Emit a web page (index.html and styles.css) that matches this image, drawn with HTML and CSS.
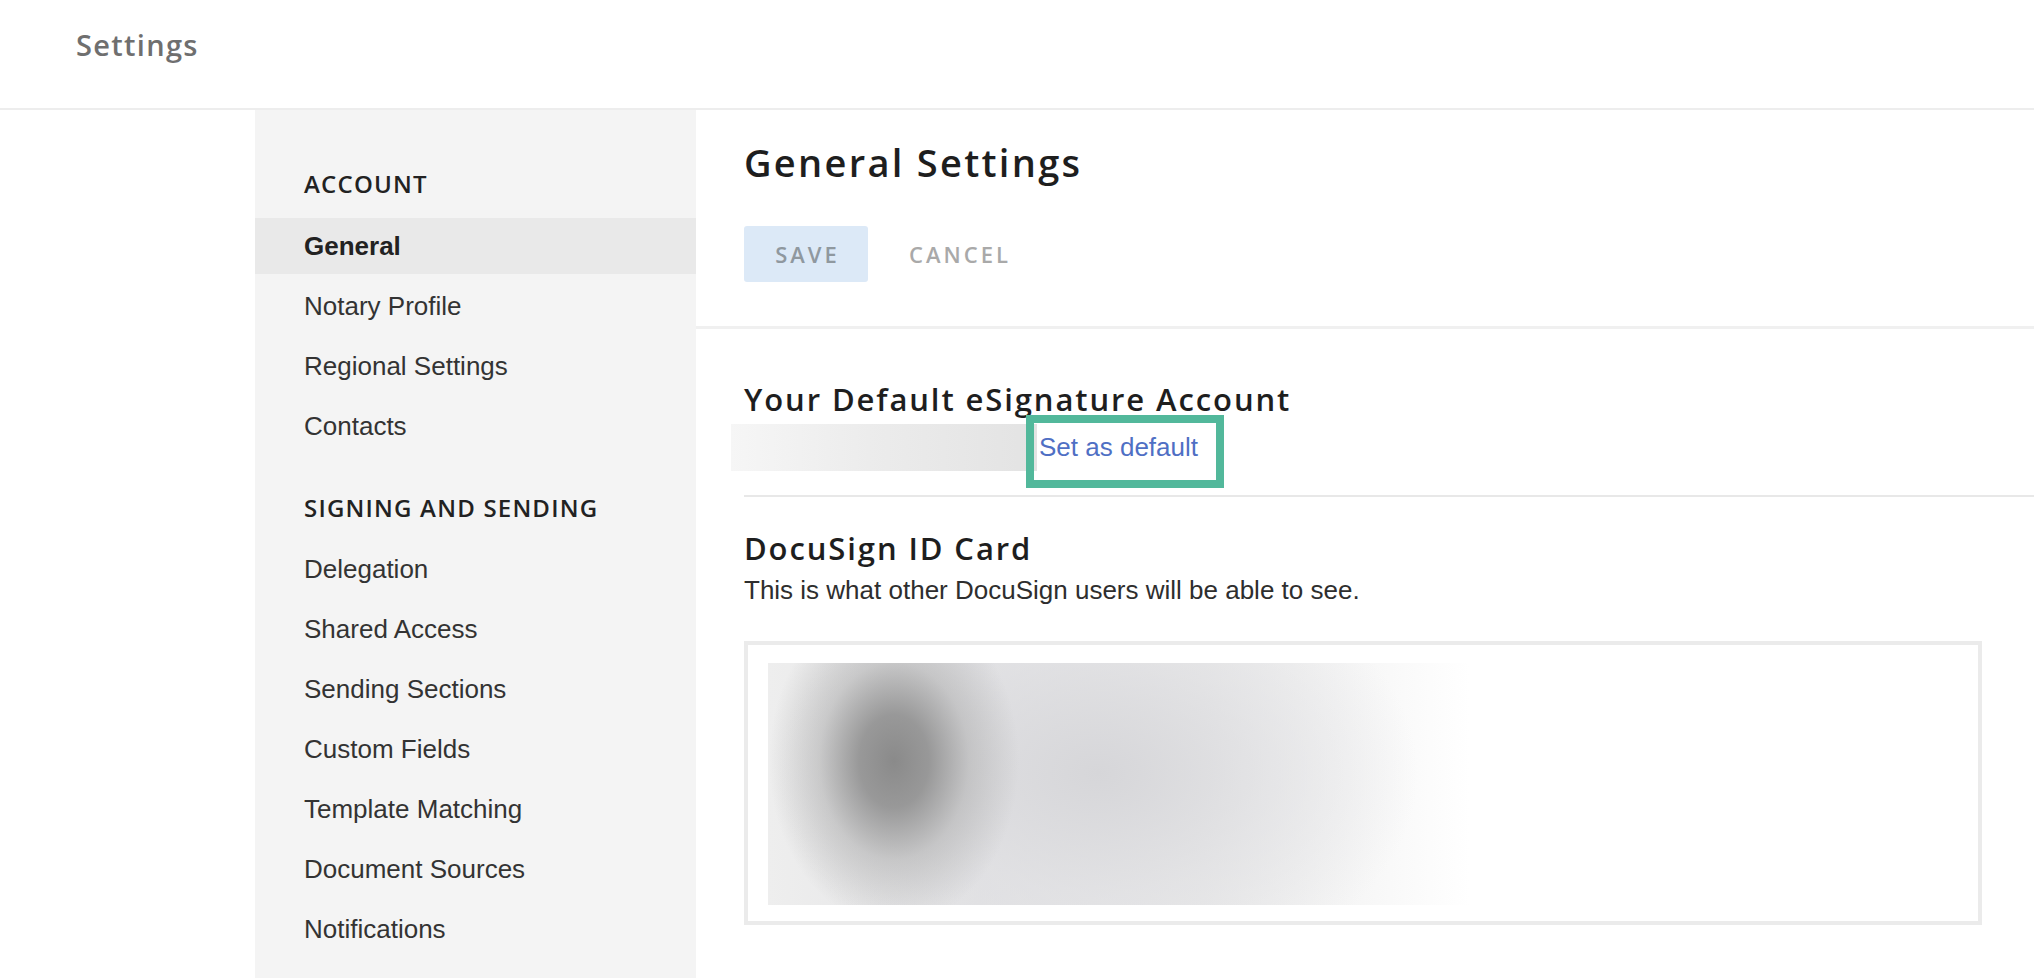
FILE: index.html
```html
<!DOCTYPE html>
<html lang="en">
<head>
<meta charset="utf-8">
<title>Settings</title>
<link rel="stylesheet" href="styles.css">
</head>
<body>
<header class="topbar">
  <div class="topbar-title">Settings</div>
</header>
<div class="layout">
  <div class="gutter"></div>
  <nav class="sidebar">
    <div class="nav-section nav-section-first">ACCOUNT</div>
    <a class="nav-item active">General</a>
    <a class="nav-item">Notary Profile</a>
    <a class="nav-item">Regional Settings</a>
    <a class="nav-item">Contacts</a>
    <div class="nav-section">SIGNING AND SENDING</div>
    <a class="nav-item">Delegation</a>
    <a class="nav-item">Shared Access</a>
    <a class="nav-item">Sending Sections</a>
    <a class="nav-item">Custom Fields</a>
    <a class="nav-item">Template Matching</a>
    <a class="nav-item">Document Sources</a>
    <a class="nav-item">Notifications</a>
  </nav>
  <main class="main">
    <section class="page-head">
      <h1 class="page-title">General Settings</h1>
      <div class="actions">
        <button class="btn btn-save">SAVE</button>
        <button class="btn btn-cancel">CANCEL</button>
      </div>
    </section>
    <section class="content">
      <h2 class="section-title section-title-first">Your Default eSignature Account</h2>
      <div class="account-row">
        <div class="blur-bar"></div>
        <div class="link-wrap">
          <a class="link">Set as default</a>
          <span class="highlight"></span>
        </div>
      </div>
      <div class="divider"></div>
      <h2 class="section-title">DocuSign ID Card</h2>
      <p class="section-sub">This is what other DocuSign users will be able to see.</p>
      <div class="id-card">
        <div class="id-blur"></div>
      </div>
    </section>
  </main>
</div>
</body>
</html>
```
FILE: styles.css
```css
* { box-sizing: border-box; }
html, body { margin: 0; padding: 0; background: #ffffff; }
body {
  font-family: "Liberation Sans", Arial, sans-serif;
  color: #333333;
  width: 2034px;
  height: 978px;
  overflow: hidden;
}

.topbar {
  height: 110px;
  border-bottom: 2px solid #ededed;
  padding: 27px 0 0 76px;
}
.topbar-title {
  font-family: "Open Sans", "Noto Sans", sans-serif;
  font-weight: 600;
  font-size: 29px;
  line-height: 36px;
  letter-spacing: 1.3px;
  color: #6f6f6f;
}

.layout {
  display: flex;
  height: 868px;
}
.gutter { width: 255px; flex: none; }

.sidebar {
  width: 441px;
  flex: none;
  background: #f4f4f4;
  padding-top: 59px;
  display: flex;
  flex-direction: column;
}
.nav-section {
  font-family: "Open Sans", "Noto Sans", sans-serif;
  font-weight: 600;
  font-size: 24px;
  line-height: 30px;
  letter-spacing: 1.2px;
  color: #222222;
  padding-left: 49px;
  margin: 35px 0 18px;
}
.nav-section-first { margin-top: 0; margin-bottom: 19px; }
.nav-item {
  display: block;
  height: 56px;
  line-height: 56px;
  margin-bottom: 4px;
  padding-left: 49px;
  font-size: 26px;
  color: #333333;
  text-decoration: none;
}
.nav-item.active {
  background: #e9e9e9;
  font-weight: 700;
  color: #222222;
}

.main {
  flex: 1;
  min-width: 0;
}
.page-head {
  padding: 29px 0 44px 48px;
  border-bottom: 3px solid #f0f0f0;
}
.page-title {
  margin: 0;
  font-family: "Open Sans", "Noto Sans", sans-serif;
  font-weight: 600;
  font-size: 38px;
  line-height: 46px;
  letter-spacing: 2.3px;
  color: #1e1e1e;
}
.actions {
  display: flex;
  gap: 10px;
  margin-top: 41px;
}
.btn {
  height: 56px;
  border: none;
  border-radius: 3px;
  padding: 0 28px 0 31px;
  font-family: "Open Sans", "Noto Sans", sans-serif;
  font-weight: 600;
  font-size: 22px;
  letter-spacing: 3px;
  background: transparent;
}
.btn-save {
  width: 124px;
  background: #dce9f7;
  color: #8f989f;
}
.btn-cancel {
  color: #a9a9a9;
}

.content {
  padding: 52px 0 0 48px;
}
.section-title {
  margin: 33px 0 0;
  font-family: "Open Sans", "Noto Sans", sans-serif;
  font-weight: 600;
  font-size: 31px;
  line-height: 36px;
  letter-spacing: 1.9px;
  color: #1e1e1e;
}
.section-title-first { margin-top: 0; }

.account-row {
  display: flex;
  align-items: center;
  height: 48px;
  margin-top: 6px;
}
.blur-bar {
  width: 306px;
  height: 47px;
  margin-left: -13px;
  background: linear-gradient(to right, #f6f6f6 0%, #ececec 45%, #e3e3e3 100%);
}
.link-wrap {
  position: relative;
  margin-left: 2px;
}
.link {
  display: block;
  font-size: 26px;
  line-height: 48px;
  color: #4f6fc4;
  text-decoration: none;
}
.highlight {
  position: absolute;
  left: -13px;
  top: -8px;
  width: 198px;
  height: 73px;
  border: 8px solid #52b89b;
}

.divider {
  margin-top: 24px;
  height: 2px;
  background: #e8e8e8;
}

.section-sub {
  margin: 9px 0 0;
  font-size: 26px;
  line-height: 30px;
  color: #2e2e2e;
}

.id-card {
  margin: 36px 52px 0 0;
  height: 284px;
  border: 4px solid #ebebeb;
  padding: 18px 0 0 20px;
}
.id-blur {
  width: 702px;
  height: 242px;
  background:
    radial-gradient(ellipse 125px 165px at 126px 98px, rgba(138,138,138,1) 0%, rgba(142,142,142,0.88) 28%, rgba(170,170,170,0.5) 60%, rgba(210,210,210,0) 100%),
    radial-gradient(ellipse 320px 220px at 330px 110px, rgba(214,214,217,1) 0%, rgba(222,222,225,0.6) 55%, rgba(230,230,232,0) 100%),
    linear-gradient(to right, #eeeeee 0%, #e3e3e5 30%, #ebebeb 62%, #ffffff 100%);
}
```
